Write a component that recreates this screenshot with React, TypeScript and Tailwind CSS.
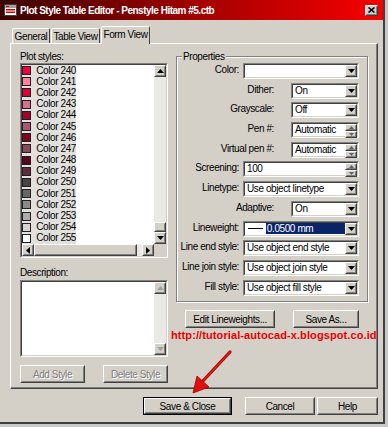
import React from "react";

const raisedOuter = "border border-t-white border-l-white border-r-[#404040] border-b-[#404040]";
const raisedInner = "border border-t-[#d4d0c8] border-l-[#d4d0c8] border-r-[#808080] border-b-[#808080]";
const sunkOuter = "border border-t-[#808080] border-l-[#808080] border-r-white border-b-white";
const sunkInner = "border border-t-[#404040] border-l-[#404040] border-r-[#d4d0c8] border-b-[#d4d0c8]";

const swatches: [number, string][] = [
  [240, "#f0003c"],
  [241, "#ff7f9f"],
  [242, "#d80036"],
  [243, "#d8708a"],
  [244, "#a3002a"],
  [245, "#a85a70"],
  [246, "#85001f"],
  [247, "#8a4a5c"],
  [248, "#5c0018"],
  [249, "#5e2c3a"],
  [250, "#454545"],
  [251, "#676767"],
  [252, "#8a8a8a"],
  [253, "#acacac"],
  [254, "#d4d4d4"],
  [255, "#ffffff"],
];

function Down({ color = "#000" }: { color?: string }) {
  return (
    <svg width="7" height="4" viewBox="0 0 7 4">
      <polygon points="0,0 7,0 3.5,4" fill={color} />
    </svg>
  );
}

function Up({ color = "#000" }: { color?: string }) {
  return (
    <svg width="7" height="4" viewBox="0 0 7 4">
      <polygon points="0,4 7,4 3.5,0" fill={color} />
    </svg>
  );
}

function Raised({ className = "", children }: { className?: string; children?: React.ReactNode }) {
  return (
    <div className={`${raisedOuter} bg-[#d4d0c8] ${className}`}>
      <div className={`${raisedInner} w-full h-full flex items-center justify-center`}>{children}</div>
    </div>
  );
}

function Sunken({ className = "", children }: { className?: string; children?: React.ReactNode }) {
  return (
    <div className={`${sunkOuter} ${className}`}>
      <div className={`${sunkInner} bg-white w-full h-full flex`}>{children}</div>
    </div>
  );
}

function Combo({ className = "", children, spin }: { className?: string; children?: React.ReactNode; spin?: boolean }) {
  return (
    <Sunken className={`h-[16px] ${className}`}>
      <div className="flex-1 flex items-center pl-[2px] overflow-hidden leading-none">{children}</div>
      {spin ? (
        <div className="w-[12px] flex flex-col">
          <Raised className="flex-1">
            <svg width="5" height="3" viewBox="0 0 5 3">
              <polygon points="0,3 5,3 2.5,0" fill="#606060" />
            </svg>
          </Raised>
          <Raised className="flex-1">
            <svg width="5" height="3" viewBox="0 0 5 3">
              <polygon points="0,0 5,0 2.5,3" fill="#606060" />
            </svg>
          </Raised>
        </div>
      ) : (
        <Raised className="w-[12px] h-full">
          <Down />
        </Raised>
      )}
    </Sunken>
  );
}

function Row({ label, wide, children }: { label: string; wide?: boolean; children: React.ReactNode }) {
  return (
    <div className="flex items-center justify-end h-[16px] pr-[8px]">
      <span className={`-mt-[3px] ${wide ? "mr-[4px]" : "mr-[17px]"}`}>{label}</span>
      {children}
    </div>
  );
}

function Button({ label, className = "", disabled, isDefault }: { label: string; className?: string; disabled?: boolean; isDefault?: boolean }) {
  const inner = (
    <Raised className={isDefault ? "w-full h-full" : `h-[18px] ${className}`}>
      <span className={disabled ? "text-[#808080] [text-shadow:1px_1px_0_#fff]" : ""}>{label}</span>
    </Raised>
  );
  if (isDefault) {
    return <div className={`border border-black h-[18px] ${className}`}>{inner}</div>;
  }
  return inner;
}

function Tab({ label, active, className = "" }: { label: string; active?: boolean; className?: string }) {
  return (
    <div
      className={`${className} flex items-center justify-center rounded-t-[2px] border-l border-t border-l-white border-t-white border-r border-r-[#404040] bg-[#d4d0c8] ${
        active ? "h-[18px] -mb-[1px] relative z-10 pb-[2px]" : "h-[15px]"
      }`}
    >
      {label}
    </div>
  );
}

function PlotList() {
  return (
    <Sunken className="h-[195px] w-[148px]">
      <div className="flex flex-col w-full">
        <div className="flex h-[180px]">
          <div className="flex-1 flex flex-col">
            {swatches.map(([n, c]) => (
              <div key={n} className="h-[11.2px] flex items-center">
                <div className="w-[54px] h-full flex items-center bg-[#e2e0dc]">
                  <div className="w-[10px] h-[9px] border border-[#202020]" style={{ backgroundColor: c }} />
                  <span className="ml-[5px] leading-none">Color {n}</span>
                </div>
              </div>
            ))}
          </div>
          <div className="w-[12px] flex flex-col bg-[#ebe9e5]">
            <Raised className="h-[12px]">
              <Up />
            </Raised>
            <div className="flex-1" />
            <Raised className="h-[10px]" />
            <Raised className="h-[12px]">
              <Down />
            </Raised>
          </div>
        </div>
        <div className="flex h-[12px] bg-[#ebe9e5]">
          <Raised className="w-[12px]">
            <svg width="4" height="7" viewBox="0 0 4 7">
              <polygon points="4,0 4,7 0,3.5" fill="#000" />
            </svg>
          </Raised>
          <Raised className="flex-1" />
          <div className="w-[5px]" />
          <Raised className="w-[12px]">
            <svg width="4" height="7" viewBox="0 0 4 7">
              <polygon points="0,0 0,7 4,3.5" fill="#000" />
            </svg>
          </Raised>
          <div className="w-[12px] bg-[#d4d0c8]" />
        </div>
      </div>
    </Sunken>
  );
}

function DescBox() {
  return (
    <Sunken className="h-[77px] w-[148px] mt-[1px]">
      <div className="flex-1" />
      <div className="w-[12px] flex flex-col bg-[#ebe9e5]">
        <Raised className="h-[12px]">
          <Up color="#a0a0a0" />
        </Raised>
        <div className="flex-1" />
        <Raised className="h-[12px]">
          <Down color="#a0a0a0" />
        </Raised>
      </div>
    </Sunken>
  );
}

function Arrow() {
  return (
    <svg className="absolute left-0 top-0 pointer-events-none" width="388" height="427" viewBox="0 0 388 427">
      <line x1="230" y1="352" x2="201" y2="383" stroke="#9a0000" strokeWidth="3.2" strokeLinecap="round" />
      <line x1="230" y1="352" x2="201" y2="383" stroke="#e81818" strokeWidth="1.8" strokeLinecap="round" />
      <polygon points="193,393 197,376 209,387" fill="#e01010" stroke="#a00000" strokeWidth="0.8" />
    </svg>
  );
}

export default function App() {
  return (
    <div className="w-[388px] h-[427px] bg-[#c9c9c9] relative overflow-hidden font-['Liberation_Sans',Arial,sans-serif] text-[10px] tracking-[-0.4px] whitespace-nowrap text-black">
      <div className="w-[385px] h-[424px] bg-[#d4d0c8] border-r-2 border-b-2 border-[#404040] flex flex-col">
        <div className="h-[20px] flex items-center pl-[4px] pr-[4px] bg-linear-to-r from-[#3c0000] via-[#a00000] to-[#f80000]">
          <svg width="13" height="12" viewBox="0 0 13 12">
            <rect x="0.5" y="0.5" width="12" height="11" fill="#fff" stroke="#404040" />
            <rect x="1" y="1" width="11" height="3" fill="#a0a0a0" />
            <rect x="2" y="5" width="9" height="1.5" fill="#d00000" />
            <rect x="2" y="7.5" width="9" height="1.5" fill="#d00000" />
            <rect x="2" y="2" width="3" height="1" fill="#d00000" />
          </svg>
          <span className="ml-[3px] text-white font-bold text-[10px] tracking-[-0.5px]">Plot Style Table Editor - Penstyle Hitam #5.ctb</span>
          <div className="flex-1" />
          <Raised className="w-[13px] h-[11px] mr-[1px]">
            <svg width="7" height="6" viewBox="0 0 7 6">
              <path d="M0.5 0.5 L6.5 5.5 M6.5 0.5 L0.5 5.5" stroke="#000" strokeWidth="1.6" />
            </svg>
          </Raised>
        </div>

        <div className="pl-[10px] pt-[6px] flex flex-col">
          <div className="flex items-end h-[17px] pl-[2px]">
            <Tab label="General" className="w-[38px]" />
            <Tab label="Table View" className="w-[49px] ml-[1px]" />
            <Tab label="Form View" className="w-[49px] ml-[1px]" active />
          </div>

          <div className="w-[368px] h-[346px] border-l border-t border-l-white border-t-white border-r border-b border-r-[#404040] border-b-[#404040]">
            <div className="w-full h-full border-r border-b border-r-[#808080] border-b-[#808080] flex pl-[9px] pt-[6px]">
              <div className="w-[148px] flex flex-col">
                <div className="h-[13px] leading-[13px]">Plot styles:</div>
                <PlotList />
                <div className="h-[13px] leading-[13px] mt-[8px]">Description:</div>
                <DescBox />
                <div className="flex mt-[8px] gap-[18px]">
                  <Button label="Add Style" className="w-[66px]" disabled />
                  <Button label="Delete Style" className="w-[66px]" disabled />
                </div>
              </div>

              <div className="w-[192px] ml-[8px] flex flex-col">
                <fieldset className="h-[252px] border border-[#808080] shadow-[inset_1px_1px_0_#fff,1px_1px_0_#fff] flex flex-col gap-[3.7px]">
                  <legend className="ml-[5px] px-[1px] h-[13px] leading-[13px] bg-[#d4d0c8]">Properties</legend>
                  <Row label="Color:" wide>
                    <Combo className="w-[116px]" />
                  </Row>
                  <Row label="Dither:">
                    <Combo className="w-[68px]">On</Combo>
                  </Row>
                  <Row label="Grayscale:">
                    <Combo className="w-[68px]">Off</Combo>
                  </Row>
                  <Row label="Pen #:">
                    <Combo className="w-[68px]" spin>Automatic</Combo>
                  </Row>
                  <Row label="Virtual pen #:">
                    <Combo className="w-[68px]" spin>Automatic</Combo>
                  </Row>
                  <Row label="Screening:" wide>
                    <Combo className="w-[116px]" spin>100</Combo>
                  </Row>
                  <Row label="Linetype:" wide>
                    <Combo className="w-[116px]">Use object linetype</Combo>
                  </Row>
                  <Row label="Adaptive:">
                    <Combo className="w-[68px]">On</Combo>
                  </Row>
                  <Row label="Lineweight:" wide>
                    <Combo className="w-[116px]">
                      <div className="w-[15px] h-px bg-black ml-[1px]" />
                      <div className="ml-[3px] w-[80px] h-[11px] bg-[#0a246a] text-white flex items-center pl-[1px]">0.0500 mm</div>
                    </Combo>
                  </Row>
                  <Row label="Line end style:" wide>
                    <Combo className="w-[116px]">Use object end style</Combo>
                  </Row>
                  <Row label="Line join style:" wide>
                    <Combo className="w-[116px]">Use object join style</Combo>
                  </Row>
                  <Row label="Fill style:" wide>
                    <Combo className="w-[116px]">Use object fill style</Combo>
                  </Row>
                </fieldset>
                <div className="flex mt-[8px] pl-[9px] gap-[18px]">
                  <Button label="Edit Lineweights..." className="w-[90px]" />
                  <Button label="Save As..." className="w-[66px]" />
                </div>
                <div className="-ml-[5px] mt-[1px] font-bold text-[#e80000] text-[11px] tracking-[0.1px] leading-[13px]">
                  http://tutorial-autocad-x.blogspot.co.id
                </div>
              </div>
            </div>
          </div>

          <div className="w-[368px] flex justify-end mt-[8px]">
            <Button label="Save & Close" className="w-[89px]" isDefault />
            <Button label="Cancel" className="w-[70px] ml-[13px]" />
            <Button label="Help" className="w-[61px] ml-[2px]" />
          </div>
        </div>
      </div>
      <Arrow />
    </div>
  );
}
